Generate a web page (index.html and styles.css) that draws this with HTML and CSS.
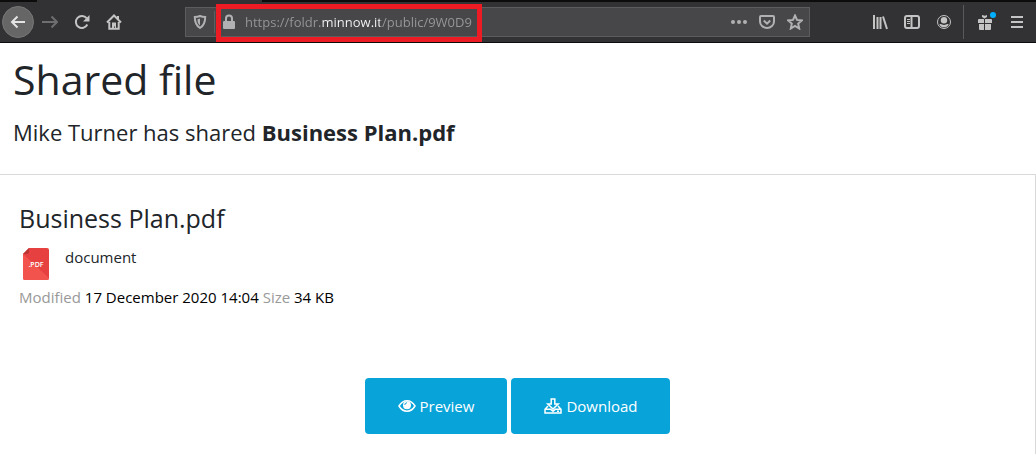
FILE: index.html
```html
<!DOCTYPE html>
<html lang="en">
<head>
    <meta charset="UTF-8">
    <meta name="viewport" content="width=device-width, initial-scale=1.0">
    <title>Shared file</title>
    <link rel="stylesheet" href="styles.css">
</head>
<body>
    <div class="tab-strip"><div class="active-tab"></div></div>
    <nav class="toolbar">
        <button class="tool back" aria-label="Back">
            <svg width="16" height="16" viewBox="0 0 16 16"><path d="M15 8H2M7.500 2.500L2 8l5.500 5.500"/></svg>
        </button>
        <button class="tool forward" aria-label="Forward" disabled>
            <svg width="16" height="16" viewBox="0 0 16 16"><path d="M0 8h15M9.500 2.500L15 8l-5.500 5.500"/></svg>
        </button>
        <button class="tool" aria-label="Reload">
            <svg width="16" height="16" viewBox="0 0 16 16"><path d="M12.600 4.200A6 6 0 1 0 13.300 10.500"/><path class="solid" d="M15.500 1v6.500H9z"/></svg>
        </button>
        <button class="tool" aria-label="Home">
            <svg width="16" height="16" viewBox="0 0 16 16"><path d="M1 8.500L8 1.500l7 7M3.300 8v6.800h9.400V8"/><path class="solid" d="M6 14.500V8.500h4v6H9v-2H8v2zM11 2h2v4l-2-2z"/></svg>
        </button>
        <form class="url-bar">
            <button type="button" class="shield" aria-label="Tracking protection">
                <svg width="14" height="16" viewBox="0 0 14 16"><path d="M7 2c2 .9 3.700 1 5.200 1 0 5.500-1 8.500-5.200 11C2.800 11.500 1.800 8.500 1.800 3 3.300 3 5 2.900 7 2z"/><path class="solid" d="M7 4.500v7C5 10 4.500 8 4.400 5.200 5.300 5.100 6.200 4.900 7 4.500z"/></svg>
            </button>
            <button type="button" class="lock" aria-label="Site security">
                <svg width="14" height="16" viewBox="0 0 14 16"><rect class="solid" x="1" y="7" width="12" height="8" rx="1"/><path d="M4 8V4.500a3 3 0 0 1 6 0V8"/></svg>
            </button>
            <input class="address" type="text" aria-label="Address" value="https://foldr.minnow.it/public/9W0D9">
            <button type="button" class="page-action" aria-label="Page actions">
                <svg width="18" height="16" viewBox="0 0 18 16"><g class="solid"><circle cx="3" cy="8" r="2"/><circle cx="9" cy="8" r="2"/><circle cx="15" cy="8" r="2"/></g></svg>
            </button>
            <button type="button" class="page-action" aria-label="Save to Pocket">
                <svg width="16" height="16" viewBox="0 0 16 16"><path d="M2 2h12a1 1 0 0 1 1 1v4.500a7 6.500 0 0 1-14 0V3a1 1 0 0 1 1-1zM4.800 6.500L8 9.600l3.200-3.100"/></svg>
            </button>
            <button type="button" class="page-action" aria-label="Bookmark">
                <svg width="16" height="16" viewBox="0 0 16 16"><path d="M8 1.500l2 4.400 4.800.5-3.600 3.200 1 4.900L8 12l-4.200 2.500 1-4.900L1.200 6.400 6 5.900z"/></svg>
            </button>
            <div class="highlight"></div>
        </form>
        <button class="tool" aria-label="Library">
            <svg width="16" height="16" viewBox="0 0 16 16"><path d="M2 1v14M5.500 3v12M8.500 3v12M11 2.500L15 15"/></svg>
        </button>
        <button class="tool" aria-label="Sidebars">
            <svg width="16" height="16" viewBox="0 0 16 16"><rect x="1" y="2" width="14" height="12" rx="2"/><path d="M7.500 2v12"/><path class="thin" d="M3 5.500h3M3 7.500h3M3 9.500h3"/></svg>
        </button>
        <button class="tool" aria-label="Account">
            <svg width="16" height="16" viewBox="0 0 16 16"><circle class="thin" cx="8" cy="8" r="6.500"/><circle class="solid" cx="8" cy="6.200" r="3.200"/><path class="solid" d="M3.300 10.500c1.200-.8 2-.4 2.700 0 1.200.6 2.800.6 4 0 .7-.4 1.500-.8 2.700 0C11.500 12.500 10 13.300 8 13.300s-3.500-.8-4.700-2.800z"/></svg>
        </button>
        <span class="divider"></span>
        <button class="tool gift" aria-label="What's new">
            <svg width="16" height="16" viewBox="0 0 16 16"><path class="solid" d="M2 5h5v4H1V6a1 1 0 0 1 1-1zM8 5h6a1 1 0 0 1 1 1v3H8zM2 10h5v6H3a1 1 0 0 1-1-1zM8 10h6v5a1 1 0 0 1-1 1H8zM5 1l3 .8L10 1v2L7.500 4.500 5 3z"/></svg>
            <span class="badge"></span>
        </button>
        <button class="tool" aria-label="Menu">
            <svg width="16" height="16" viewBox="0 0 16 16"><path d="M2 3h12M2 8h12M2 13h12"/></svg>
        </button>
    </nav>

    <header class="page-header">
        <h1>Shared file</h1>
        <p>Mike Turner has shared <strong>Business Plan.pdf</strong></p>
    </header>

    <main class="panel">
        <h2>Business Plan.pdf</h2>
        <div class="file-type">
            <svg class="file-icon" width="26" height="32" viewBox="0 0 26 32">
                <path fill="#e64140" d="M6 0h18a2 2 0 0 1 2 2v28a2 2 0 0 1-2 2H2a2 2 0 0 1-2-2V6z"/>
                <path fill="#f2544d" d="M0 6l26 24a2 2 0 0 1-2 2H2a2 2 0 0 1-2-2z"/>
                <path fill="#b93433" d="M6 0v4a2 2 0 0 1-2 2H0z"/>
                <text x="13" y="19" text-anchor="middle">.PDF</text>
            </svg>
            <span>document</span>
        </div>
        <p class="meta"><span>Modified</span> 17 December 2020 14:04 <span>Size</span> 34 KB</p>
        <div class="actions">
            <button class="btn">
                <svg width="18" height="16" viewBox="0 0 18 16"><path d="M1 8c2-3.400 4.700-5.200 8-5.200S15 4.600 17 8c-2 3.400-4.700 5.200-8 5.200S3 11.400 1 8z"/><circle class="solid" cx="9" cy="7.200" r="4"/><path class="glint" d="M6.800 7A2.200 2.200 0 0 1 9 4.800"/></svg>
                Preview
            </button>
            <button class="btn">
                <svg width="18" height="16" viewBox="0 0 18 16"><path d="M7.200 1h3.600v5h3.400L9 11 3.800 6h3.400zM4 8L1 11.200v3.900h16v-3.900L14 8M1 11.200h5.500L9 13.200l2.500-2H17"/><path class="solid" d="M13 12.500h2v1.500h-2z"/></svg>
                Download
            </button>
        </div>
    </main>
</body>
</html>
```
FILE: styles.css
```css
* {
    box-sizing: border-box;
}
body {
    font-family: "Open Sans", "Noto Sans", sans-serif;
    font-size: 15px;
    line-height: 24px;
    margin: 0;
    min-height: 100vh;
    display: flex;
    flex-direction: column;
    background: #ffffff;
    color: #212529;
}
button {
    font: inherit;
    margin: 0;
    padding: 0;
    border: none;
    background: none;
    color: inherit;
}
h1, h2, p {
    margin: 0;
    font-weight: 400;
}

/* Browser toolbar */
.tab-strip {
    height: 2px;
    padding-left: 37px;
    background: #0c0c0d;
}
.active-tab {
    width: 225px;
    height: 2px;
    background: #323234;
}
.toolbar {
    display: flex;
    align-items: center;
    height: 41px;
    padding: 0 3px 0 2px;
    background: #323234;
    border-bottom: 1px solid #0c0c0d;
    color: #c4c4c5;
}
.toolbar svg {
    display: block;
    fill: none;
    stroke: currentColor;
    stroke-width: 2;
}
.toolbar .solid {
    fill: currentColor;
    stroke: none;
}
.toolbar .thin {
    stroke-width: 1;
}
.tool {
    position: relative;
    display: flex;
    align-items: center;
    justify-content: center;
    width: 32px;
    height: 32px;
}
.back {
    border-radius: 50%;
    background: #666667;
    border: 1px solid #777778;
    color: #e4e4e4;
}
.forward {
    color: #6e6e70;
}
.url-bar {
    position: relative;
    flex: 1;
    display: flex;
    align-items: center;
    height: 30px;
    margin: 0 54px 0 55px;
    background: #474749;
    border: 1px solid #5c5c5e;
    color: #b1b1b3;
}
.shield {
    display: flex;
    align-items: center;
    justify-content: center;
    width: 29px;
    height: 22px;
    border-right: 1px solid #5f5f61;
}
.lock {
    padding: 0 9px 0 7px;
}
.address {
    flex: 1;
    min-width: 0;
    padding: 0;
    border: none;
    outline: none;
    font-family: inherit;
    font-size: 13px;
    /* host name is brighter than the rest of the address */
    color: transparent;
    background: linear-gradient(to right, #98989a 76px, #f9f9fa 76px, #f9f9fa 135px, #98989a 135px);
    -webkit-background-clip: text;
    background-clip: text;
}
.page-action {
    display: flex;
    align-items: center;
    justify-content: center;
    width: 28px;
    height: 28px;
}
.highlight {
    position: absolute;
    left: 30px;
    top: -4px;
    width: 266px;
    height: 38px;
    border: 5px solid #ed1c24;
    pointer-events: none;
}
.divider {
    width: 1px;
    height: 34px;
    margin: 0 5px 0 3px;
    background: #59595b;
}
.badge {
    position: absolute;
    top: 6px;
    right: 5px;
    width: 6px;
    height: 6px;
    border-radius: 50%;
    background: #00b0ff;
}

/* Page */
.page-header {
    padding: 6px 13px 26px;
}
.page-header h1 {
    font-size: 41px;
    line-height: 60px;
}
.page-header p {
    margin-top: 7px;
    font-size: 22px;
    line-height: 32px;
}
.panel {
    flex: 1;
    padding: 25px 19px 20px;
    border-top: 1px solid #d9d9d9;
    border-right: 1px solid #d9d9d9;
}
.panel h2 {
    font-size: 25px;
    line-height: 36px;
}
.file-type {
    display: flex;
    gap: 16px;
    margin-top: 9px;
    padding-left: 4px;
}
.file-icon {
    margin-top: 3px;
}
.file-icon text {
    font-size: 7px;
    font-weight: 600;
    fill: #ffffff;
}
.meta {
    margin-top: 5px;
    color: #000000;
}
.meta span {
    color: #999999;
}
.actions {
    display: flex;
    justify-content: center;
    gap: 4px;
    margin-top: 69px;
}
.btn {
    display: flex;
    align-items: center;
    gap: 4px;
    height: 56px;
    padding: 0 33px;
    border-radius: 4px;
    background: #08a4d9;
    color: #ffffff;
}
.btn svg {
    fill: none;
    stroke: currentColor;
    stroke-width: 1.5;
}
.btn .solid {
    fill: currentColor;
    stroke: none;
}
.btn .glint {
    stroke: #08a4d9;
    stroke-width: 1;
}
```
